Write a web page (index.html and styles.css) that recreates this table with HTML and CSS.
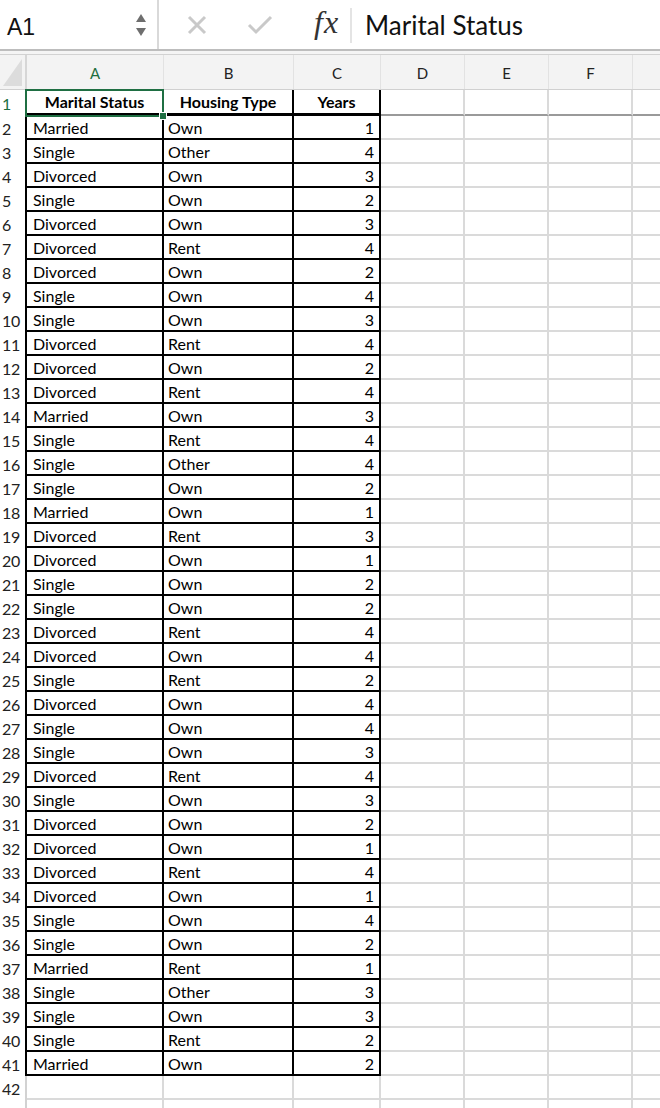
FILE: index.html
```html
<!DOCTYPE html>
<html>
<head>
<meta charset="utf-8">
<link rel="stylesheet" href="styles.css">
</head>
<body>
<div class="app">
  <div class="fbar">
    <div class="namebox">
      <span class="ref">A1</span>
      <span class="spin">
        <svg width="12" height="26" viewBox="0 0 12 26"><path d="M6 2 L11 10 L1 10 Z" fill="#6e6e6e"/><path d="M1 16 L11 16 L6 24 Z" fill="#6e6e6e"/></svg>
      </span>
    </div>
    <div class="ficons">
      <svg class="x" width="22" height="22" viewBox="0 0 22 22"><path d="M3 3 L19 19 M19 3 L3 19" stroke="#c9c9c9" stroke-width="3" fill="none"/></svg>
      <svg class="ok" width="26" height="22" viewBox="0 0 26 22"><path d="M2 11 L9 18 L24 3" stroke="#c9c9c9" stroke-width="3" fill="none"/></svg>
      <span class="fx">fx</span>
    </div>
    <div class="formula">Marital Status</div>
  </div>
  <div class="sep"></div>
  <div class="sheet">
    <div class="row hdr">
      <div class="corner"><span class="tri"></span></div>
      <div class="ch sel">A</div><div class="ch">B</div><div class="ch">C</div><div class="ch">D</div><div class="ch">E</div><div class="ch">F</div><div class="ch"></div>
    </div>
    <div class="row r1">
      <div class="rh sel">1</div><div class="c a bd">Marital Status</div><div class="c b bd">Housing Type</div><div class="c n bd">Years</div><div class="c"></div><div class="c"></div><div class="c"></div><div class="c"></div>
    </div>
    <div class="row"><div class="rh">2</div><div class="c a">Married</div><div class="c b">Own</div><div class="c n">1</div><div class="c"></div><div class="c"></div><div class="c"></div><div class="c"></div></div>
    <div class="row"><div class="rh">3</div><div class="c a">Single</div><div class="c b">Other</div><div class="c n">4</div><div class="c"></div><div class="c"></div><div class="c"></div><div class="c"></div></div>
    <div class="row"><div class="rh">4</div><div class="c a">Divorced</div><div class="c b">Own</div><div class="c n">3</div><div class="c"></div><div class="c"></div><div class="c"></div><div class="c"></div></div>
    <div class="row"><div class="rh">5</div><div class="c a">Single</div><div class="c b">Own</div><div class="c n">2</div><div class="c"></div><div class="c"></div><div class="c"></div><div class="c"></div></div>
    <div class="row"><div class="rh">6</div><div class="c a">Divorced</div><div class="c b">Own</div><div class="c n">3</div><div class="c"></div><div class="c"></div><div class="c"></div><div class="c"></div></div>
    <div class="row"><div class="rh">7</div><div class="c a">Divorced</div><div class="c b">Rent</div><div class="c n">4</div><div class="c"></div><div class="c"></div><div class="c"></div><div class="c"></div></div>
    <div class="row"><div class="rh">8</div><div class="c a">Divorced</div><div class="c b">Own</div><div class="c n">2</div><div class="c"></div><div class="c"></div><div class="c"></div><div class="c"></div></div>
    <div class="row"><div class="rh">9</div><div class="c a">Single</div><div class="c b">Own</div><div class="c n">4</div><div class="c"></div><div class="c"></div><div class="c"></div><div class="c"></div></div>
    <div class="row"><div class="rh">10</div><div class="c a">Single</div><div class="c b">Own</div><div class="c n">3</div><div class="c"></div><div class="c"></div><div class="c"></div><div class="c"></div></div>
    <div class="row"><div class="rh">11</div><div class="c a">Divorced</div><div class="c b">Rent</div><div class="c n">4</div><div class="c"></div><div class="c"></div><div class="c"></div><div class="c"></div></div>
    <div class="row"><div class="rh">12</div><div class="c a">Divorced</div><div class="c b">Own</div><div class="c n">2</div><div class="c"></div><div class="c"></div><div class="c"></div><div class="c"></div></div>
    <div class="row"><div class="rh">13</div><div class="c a">Divorced</div><div class="c b">Rent</div><div class="c n">4</div><div class="c"></div><div class="c"></div><div class="c"></div><div class="c"></div></div>
    <div class="row"><div class="rh">14</div><div class="c a">Married</div><div class="c b">Own</div><div class="c n">3</div><div class="c"></div><div class="c"></div><div class="c"></div><div class="c"></div></div>
    <div class="row"><div class="rh">15</div><div class="c a">Single</div><div class="c b">Rent</div><div class="c n">4</div><div class="c"></div><div class="c"></div><div class="c"></div><div class="c"></div></div>
    <div class="row"><div class="rh">16</div><div class="c a">Single</div><div class="c b">Other</div><div class="c n">4</div><div class="c"></div><div class="c"></div><div class="c"></div><div class="c"></div></div>
    <div class="row"><div class="rh">17</div><div class="c a">Single</div><div class="c b">Own</div><div class="c n">2</div><div class="c"></div><div class="c"></div><div class="c"></div><div class="c"></div></div>
    <div class="row"><div class="rh">18</div><div class="c a">Married</div><div class="c b">Own</div><div class="c n">1</div><div class="c"></div><div class="c"></div><div class="c"></div><div class="c"></div></div>
    <div class="row"><div class="rh">19</div><div class="c a">Divorced</div><div class="c b">Rent</div><div class="c n">3</div><div class="c"></div><div class="c"></div><div class="c"></div><div class="c"></div></div>
    <div class="row"><div class="rh">20</div><div class="c a">Divorced</div><div class="c b">Own</div><div class="c n">1</div><div class="c"></div><div class="c"></div><div class="c"></div><div class="c"></div></div>
    <div class="row"><div class="rh">21</div><div class="c a">Single</div><div class="c b">Own</div><div class="c n">2</div><div class="c"></div><div class="c"></div><div class="c"></div><div class="c"></div></div>
    <div class="row"><div class="rh">22</div><div class="c a">Single</div><div class="c b">Own</div><div class="c n">2</div><div class="c"></div><div class="c"></div><div class="c"></div><div class="c"></div></div>
    <div class="row"><div class="rh">23</div><div class="c a">Divorced</div><div class="c b">Rent</div><div class="c n">4</div><div class="c"></div><div class="c"></div><div class="c"></div><div class="c"></div></div>
    <div class="row"><div class="rh">24</div><div class="c a">Divorced</div><div class="c b">Own</div><div class="c n">4</div><div class="c"></div><div class="c"></div><div class="c"></div><div class="c"></div></div>
    <div class="row"><div class="rh">25</div><div class="c a">Single</div><div class="c b">Rent</div><div class="c n">2</div><div class="c"></div><div class="c"></div><div class="c"></div><div class="c"></div></div>
    <div class="row"><div class="rh">26</div><div class="c a">Divorced</div><div class="c b">Own</div><div class="c n">4</div><div class="c"></div><div class="c"></div><div class="c"></div><div class="c"></div></div>
    <div class="row"><div class="rh">27</div><div class="c a">Single</div><div class="c b">Own</div><div class="c n">4</div><div class="c"></div><div class="c"></div><div class="c"></div><div class="c"></div></div>
    <div class="row"><div class="rh">28</div><div class="c a">Single</div><div class="c b">Own</div><div class="c n">3</div><div class="c"></div><div class="c"></div><div class="c"></div><div class="c"></div></div>
    <div class="row"><div class="rh">29</div><div class="c a">Divorced</div><div class="c b">Rent</div><div class="c n">4</div><div class="c"></div><div class="c"></div><div class="c"></div><div class="c"></div></div>
    <div class="row"><div class="rh">30</div><div class="c a">Single</div><div class="c b">Own</div><div class="c n">3</div><div class="c"></div><div class="c"></div><div class="c"></div><div class="c"></div></div>
    <div class="row"><div class="rh">31</div><div class="c a">Divorced</div><div class="c b">Own</div><div class="c n">2</div><div class="c"></div><div class="c"></div><div class="c"></div><div class="c"></div></div>
    <div class="row"><div class="rh">32</div><div class="c a">Divorced</div><div class="c b">Own</div><div class="c n">1</div><div class="c"></div><div class="c"></div><div class="c"></div><div class="c"></div></div>
    <div class="row"><div class="rh">33</div><div class="c a">Divorced</div><div class="c b">Rent</div><div class="c n">4</div><div class="c"></div><div class="c"></div><div class="c"></div><div class="c"></div></div>
    <div class="row"><div class="rh">34</div><div class="c a">Divorced</div><div class="c b">Own</div><div class="c n">1</div><div class="c"></div><div class="c"></div><div class="c"></div><div class="c"></div></div>
    <div class="row"><div class="rh">35</div><div class="c a">Single</div><div class="c b">Own</div><div class="c n">4</div><div class="c"></div><div class="c"></div><div class="c"></div><div class="c"></div></div>
    <div class="row"><div class="rh">36</div><div class="c a">Single</div><div class="c b">Own</div><div class="c n">2</div><div class="c"></div><div class="c"></div><div class="c"></div><div class="c"></div></div>
    <div class="row"><div class="rh">37</div><div class="c a">Married</div><div class="c b">Rent</div><div class="c n">1</div><div class="c"></div><div class="c"></div><div class="c"></div><div class="c"></div></div>
    <div class="row"><div class="rh">38</div><div class="c a">Single</div><div class="c b">Other</div><div class="c n">3</div><div class="c"></div><div class="c"></div><div class="c"></div><div class="c"></div></div>
    <div class="row"><div class="rh">39</div><div class="c a">Single</div><div class="c b">Own</div><div class="c n">3</div><div class="c"></div><div class="c"></div><div class="c"></div><div class="c"></div></div>
    <div class="row"><div class="rh">40</div><div class="c a">Single</div><div class="c b">Rent</div><div class="c n">2</div><div class="c"></div><div class="c"></div><div class="c"></div><div class="c"></div></div>
    <div class="row"><div class="rh">41</div><div class="c a">Married</div><div class="c b">Own</div><div class="c n">2</div><div class="c"></div><div class="c"></div><div class="c"></div><div class="c"></div></div>
    <div class="row empty"><div class="rh">42</div><div class="c"></div><div class="c"></div><div class="c"></div><div class="c"></div><div class="c"></div><div class="c"></div><div class="c"></div></div>
    <div class="row empty"><div class="rh">43</div><div class="c"></div><div class="c"></div><div class="c"></div><div class="c"></div><div class="c"></div><div class="c"></div><div class="c"></div></div>
    <div class="selbox"><span class="handle"></span></div>
  </div>
</div>
</body>
</html>
```

FILE: styles.css
```css
* { box-sizing: border-box; }
html, body { margin: 0; padding: 0; background: #fff; }
body { width: 660px; height: 1108px; overflow: hidden; font-family: "Lato", "Liberation Sans", sans-serif; color: #000; }

.app { width: 660px; overflow: hidden; }

.fbar { display: flex; align-items: stretch; height: 49px; background: #fff; }
.namebox { width: 159px; display: flex; align-items: center; justify-content: space-between; padding: 0 10px 0 7px; border-right: 2px solid #d9d9d9; }
.ref { font-family: "Liberation Sans", "Inter", sans-serif; font-size: 23px; color: #111; padding-top: 5px; }
.spin { display: flex; align-items: center; }
.ficons { width: 191px; display: flex; align-items: center; padding-left: 27px; }
.ficons .x { margin-right: 39px; }
.ficons .ok { margin-right: 41px; }
.fx { font-family: "Liberation Serif", serif; font-style: italic; font-size: 32px; color: #333; letter-spacing: 1px; padding-bottom: 4px; }
.formula { flex: 1; display: flex; align-items: center; padding-left: 13px; font-size: 26px; color: #111; border-left: 2px solid #e4e4e4; margin: 8px 0 6px; padding-bottom: 2px; }

.sep { height: 6px; border-top: 2px solid #bdbdbd; border-bottom: 1px solid #d2d2d2; background: #f4f4f4; }

.sheet { position: relative; }
.row { display: grid; grid-template-columns: 27px 137px 130px 87px 84px 84px 84px 84px; height: 24px; }
.row.hdr { height: 35px; background: #f3f3f3; border-bottom: 1px solid #d0d0d0; }
.row.r1 { height: 26px; }

.corner { position: relative; border-right: 2px solid #d6d6d6; }
.tri { position: absolute; right: 3px; bottom: 3px; width: 0; height: 0; border-left: 19px solid transparent; border-bottom: 27px solid #dcdcdc; }
.ch { display: flex; align-items: center; justify-content: center; font-size: 15px; color: #222; border-right: 1px solid #e2e2e2; padding-top: 2px; }
.ch.sel { color: #1e6e3f; }

.rh { position: relative; overflow: hidden; font-size: 16px; color: #222; border-right: 2px solid #000; display: flex; align-items: center; justify-content: flex-start; padding-left: 2px; letter-spacing: -0.3px; }
.rh.sel { color: #1e6e3f; border-right-color: transparent; }
.row.empty .rh { border-right: 2px solid #d2d2d2; }

.c { border-right: 2px solid #dadada; border-bottom: 2px solid #dadada; font-size: 16px; display: flex; align-items: center; white-space: nowrap; overflow: hidden; }
.c.a, .c.b, .c.n { border-right-color: #000; border-bottom-color: #000; }
.c.a { padding-left: 6px; }
.c.b { padding-left: 4px; }
.c.n { justify-content: flex-end; padding-right: 5px; }
.c.bd { font-weight: 700; justify-content: center; padding: 0; }
.r1 .c { border-bottom: 2px solid #9a9a9a; }
.r1 .c.bd { border-bottom: 3px solid #000; }

.selbox { position: absolute; left: 25px; top: 34px; width: 139px; height: 28px; border: 2px solid #1f6f43; }
.handle { position: absolute; right: -5px; bottom: -5px; width: 8px; height: 8px; background: #1f6f43; border: 1px solid #fff; }
```
